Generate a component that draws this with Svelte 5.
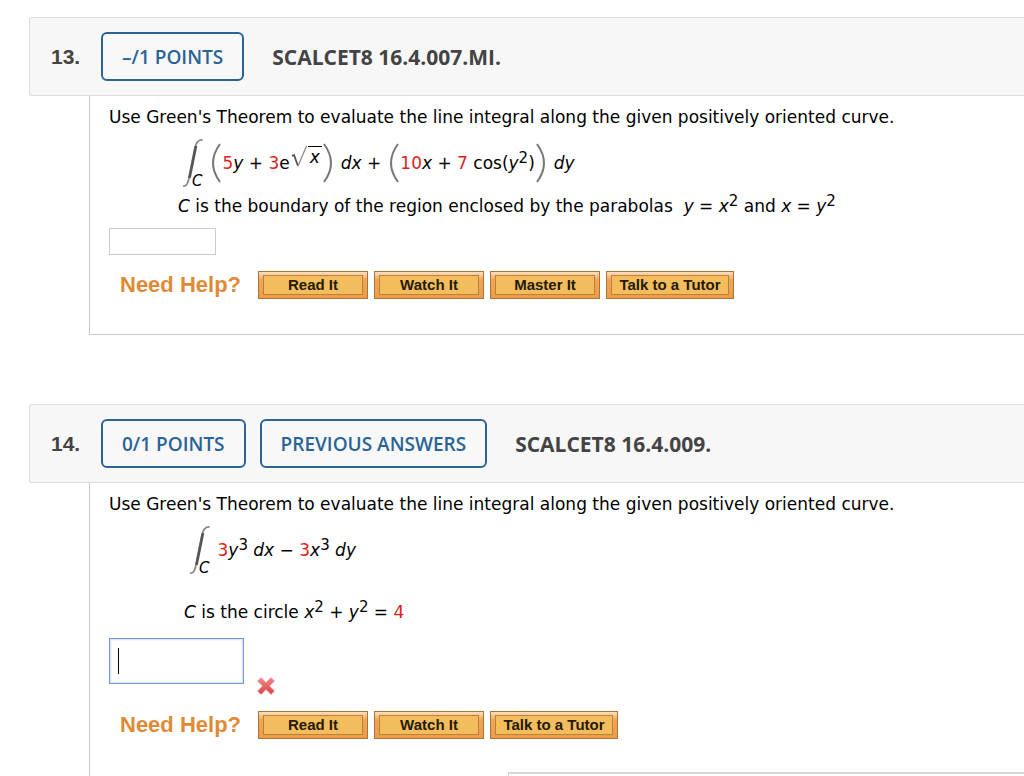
<script lang="ts">
  let first = $state("");
  let second = $state("");
</script>

{#snippet integral()}
  <span class="integral">
    <svg width="22" height="50" viewBox="0 0 22 50" aria-hidden="true">
      <path d="M1 48 Q5 49 6.500 42 L12.500 12 Q14.500 1 20.500 2" fill="none" stroke="#888" stroke-width="1.800" />
      <path d="M14 8 L7.500 40" stroke="#555" stroke-width="2.600" />
    </svg>
    <i>C</i>
  </span>
{/snippet}

{#snippet open()}
  <svg class="paren" width="10" height="40" viewBox="0 0 10 40" aria-hidden="true">
    <path d="M9 1 Q-5 20 9 39" fill="none" stroke="#777" stroke-width="2" />
  </svg>
{/snippet}

{#snippet close()}
  <svg class="paren" width="10" height="40" viewBox="0 0 10 40" aria-hidden="true">
    <path d="M1 1 Q15 20 1 39" fill="none" stroke="#777" stroke-width="2" />
  </svg>
{/snippet}

{#snippet help(items: string[])}
  <div class="help">
    <strong>Need Help?</strong>
    {#each items as item}
      <button class="help-btn" class:wide={item.length > 10}><span>{item}</span></button>
    {/each}
  </div>
{/snippet}

<main>
  <section>
    <header>
      <span class="num">13.</span>
      <button class="pill">–/1 POINTS</button>
      <h2>SCALCET8 16.4.007.MI.</h2>
    </header>
    <div class="body closed">
      <p>Use Green's Theorem to evaluate the line integral along the given positively oriented curve.</p>
      <div class="math">
        {@render integral()}
        {@render open()}
        <span><b>5</b><i>y</i> + <b>3</b>e</span>
        <span class="root">
          <svg width="18" height="24" viewBox="0 0 18 24" aria-hidden="true">
            <path d="M2 12 L4 11 L8 22" fill="none" stroke="#555" stroke-width="1.800" />
            <path d="M8 22 L16.500 2" fill="none" stroke="#888" stroke-width="1.200" />
          </svg>
          <i>x</i>
        </span>
        {@render close()}
        <span class="term"><i>dx</i> +</span>
        {@render open()}
        <span><b>10</b><i>x</i> + <b>7</b> cos(<i>y</i><sup>2</sup>)</span>
        {@render close()}
        <span class="term"><i>dy</i></span>
      </div>
      <p class="where"><i>C</i> is the boundary of the region enclosed by the parabolas&nbsp; <i>y</i> = <i>x</i><sup>2</sup> and <i>x</i> = <i>y</i><sup>2</sup></p>
      <div class="answer">
        <input class="small" type="text" aria-label="Answer to question 13" bind:value={first} />
      </div>
      {@render help(["Read It", "Watch It", "Master It", "Talk to a Tutor"])}
    </div>
  </section>

  <section>
    <header>
      <span class="num">14.</span>
      <button class="pill">0/1 POINTS</button>
      <button class="pill">PREVIOUS ANSWERS</button>
      <h2>SCALCET8 16.4.009.</h2>
    </header>
    <div class="body">
      <p>Use Green's Theorem to evaluate the line integral along the given positively oriented curve.</p>
      <div class="math indent">
        {@render integral()}
        <span class="term"><b>3</b><i>y</i><sup>3</sup> <i>dx</i> − <b>3</b><i>x</i><sup>3</sup> <i>dy</i></span>
      </div>
      <p class="where spaced"><i>C</i> is the circle <i>x</i><sup>2</sup> + <i>y</i><sup>2</sup> = <b>4</b></p>
      <div class="answer">
        <span class="field">
          <input class="large" type="text" aria-label="Answer to question 14" bind:value={second} />
          {#if second === ""}<span class="caret"></span>{/if}
        </span>
        <svg class="wrong" width="18" height="18" viewBox="0 0 18 18" role="img" aria-label="Incorrect">
          <defs>
            <linearGradient id="red" x1="0" y1="0" x2="0" y2="1">
              <stop offset="0" stop-color="#f08a8a" />
              <stop offset="1" stop-color="#dd4242" />
            </linearGradient>
          </defs>
          <path d="M4 .5 L9 5.500 L14 .5 L17.500 4 L12.500 9 L17.500 14 L14 17.500 L9 12.500 L4 17.500 L.5 14 L5.500 9 L.5 4 Z" fill="url(#red)" stroke="#ef9a9a" stroke-width=".6" stroke-linejoin="round" />
        </svg>
      </div>
      {@render help(["Read It", "Watch It", "Talk to a Tutor"])}
      <div class="panel"></div>
    </div>
  </section>
</main>

<style>
  :global(body) {
    background: #fff;
  }

  main {
    padding: 17px 0 0 29px;
    color: #000;
    font-family: "DejaVu Sans", Verdana, sans-serif;
    font-size: 17px;
    line-height: 22px;
    overflow: hidden;
  }

  header {
    display: flex;
    align-items: center;
    height: 77px;
    padding-left: 21px;
    background: #f7f7f7;
    border: 1px solid #dcdcdc;
    border-right: 0;
    border-radius: 3px 0 0 3px;
  }

  .num {
    width: 50px;
    color: #444;
    font: bold 21px/24px "Liberation Sans", Arial, sans-serif;
  }

  .pill {
    height: 49px;
    margin-right: 14px;
    padding: 0 19px;
    color: #2a6496;
    background: #f8f8f8;
    border: 2px solid #2a6496;
    border-radius: 6px;
    font: 600 19px/24px "Open Sans", sans-serif;
  }

  h2 {
    margin: 0 0 0 14px;
    color: #444;
    font: bold 21px/28px "Open Sans", sans-serif;
  }

  .body {
    margin-left: 60px;
    padding: 10px 0 0 19px;
    border-left: 1px solid #c8c8c8;
  }

  .closed {
    padding-bottom: 35px;
    margin-bottom: 69px;
    border-bottom: 1px solid #c8c8c8;
  }

  p {
    margin: 0;
    white-space: nowrap;
  }

  b {
    color: #dd1f1a;
    font-weight: normal;
  }

  sup {
    position: relative;
    top: -6px;
    font-size: 15px;
    line-height: 0;
    vertical-align: baseline;
  }

  .math {
    display: flex;
    align-items: center;
    height: 50px;
    margin: 10px 0 0 73px;
    white-space: nowrap;
  }

  .indent {
    margin-left: 80px;
  }

  .integral {
    display: flex;
    align-items: flex-end;
    margin-right: 8px;
  }

  .integral i {
    margin-left: -12px;
    font-size: 15px;
    line-height: 13px;
  }

  .paren {
    margin: 0 1px;
  }

  .root {
    display: flex;
    align-items: center;
    margin-bottom: 14px;
  }

  .root i {
    padding: 0 2px;
    border-top: 1px solid #000;
    font-size: 17px;
    line-height: 20px;
  }

  .term {
    margin: 0 7px;
  }

  .indent .term {
    margin-left: 0;
  }

  .where {
    margin: 7px 0 0 69px;
  }

  .spaced {
    margin: 26px 0 0 75px;
  }

  .answer {
    display: flex;
    align-items: flex-end;
    margin-top: 11px;
  }

  .spaced + .answer {
    margin-top: 15px;
  }

  input {
    box-sizing: border-box;
    padding: 0 8px;
    font: 18px "DejaVu Sans", sans-serif;
    background: #fff;
    border: 1px solid #ccc;
    outline: 0;
  }

  .small {
    width: 107px;
    height: 27px;
  }

  .field {
    display: flex;
    position: relative;
  }

  .large {
    width: 135px;
    height: 46px;
    border-color: #7399c6;
    box-shadow: inset 0 0 2px 1px #cfe2fa;
  }

  .caret {
    position: absolute;
    top: 10px;
    left: 9px;
    width: 1px;
    height: 26px;
    background: #000;
  }

  .wrong {
    margin: 0 0 -11px 13px;
  }

  .help {
    display: flex;
    align-items: center;
    gap: 6px;
    margin: 16px 0 0 11px;
  }

  .spaced ~ .help {
    margin-top: 27px;
  }

  .help strong {
    width: 132px;
    color: #e08a35;
    font: bold 22px/28px "Liberation Sans", Arial, sans-serif;
    white-space: nowrap;
  }

  .help-btn {
    display: flex;
    width: 110px;
    height: 28px;
    padding: 3px 4px;
    background: linear-gradient(#f9dfc4, #f0a555 30%, #ee9c49);
    border: 1px solid #aa7638;
  }

  .wide {
    width: 128px;
  }

  .help-btn span {
    flex: 1;
    color: #231a08;
    background: #f3bd5d;
    border: 1px solid #b98238;
    font: bold 15px/18px "Liberation Sans", Arial, sans-serif;
    white-space: nowrap;
  }

  .panel {
    height: 40px;
    margin: 33px 0 0 399px;
    border-top: 2px solid #d6d6d6;
    border-left: 1px solid #d6d6d6;
  }
</style>
